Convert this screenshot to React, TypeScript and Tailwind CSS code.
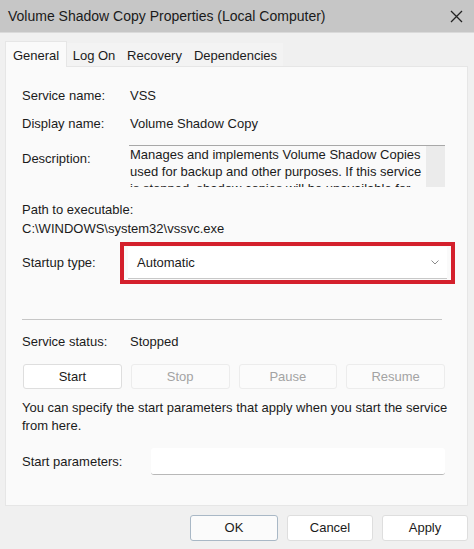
import React from "react";

const font = { fontFamily: '"Liberation Sans", Arial, sans-serif' };

function Btn({ children, disabled }: { children: React.ReactNode; disabled?: boolean }) {
  return (
    <div
      className={
        "h-[25px] flex items-center justify-center text-[13px] rounded-[3px] border " +
        (disabled ? "bg-[#fbfbfb] border-[#ececec] text-[#a3a3a3]" : "bg-white border-[#dedede] text-[#1b1b1b]")
      }
    >
      {children}
    </div>
  );
}

export default function App() {
  return (
    <div className="w-[474px] h-[549px] bg-[#f0f0f0] flex flex-col text-[#1b1b1b] overflow-hidden" style={font}>
      {/* Title bar */}
      <div className="h-[33px] bg-[#c6c6c6] border-b border-[#dadada] flex items-center justify-between pl-[8px] pr-[11px] shrink-0">
        <span className="text-[14px] text-[#1a1a1a]">Volume Shadow Copy Properties (Local Computer)</span>
        <svg width="13" height="13" viewBox="0 0 13 13" className="mt-[1px]">
          <path d="M1 1 L12 12 M12 1 L1 12" stroke="#222" strokeWidth="1.3" fill="none" />
        </svg>
      </div>

      {/* Tabs */}
      <div className="flex items-end pl-[5px] pt-[8px] shrink-0">
        <div className="h-[26px] w-[62px] bg-[#fafafa] border-t border-l border-r border-[#e6e6e6] flex items-start justify-center pt-[4px] text-[13px] -mb-px relative z-10">
          General
        </div>
        <div className="h-[23px] w-[54px] bg-[#f3f3f3] flex items-center justify-center text-[13px] pt-[3px]">Log On</div>
        <div className="h-[23px] w-[67px] bg-[#f3f3f3] flex items-center justify-center text-[13px] pt-[3px]">Recovery</div>
        <div className="h-[23px] w-[95px] bg-[#f3f3f3] flex items-center justify-center text-[13px] pt-[3px]">Dependencies</div>
      </div>

      {/* Panel */}
      <div className="ml-[5px] mr-[6px] h-[440px] bg-[#fafafa] border border-[#e6e6e6] flex flex-col pl-[16px] text-[13px] shrink-0">
        <div className="mt-[19px] h-[20px] flex items-center">
          <span className="w-[108px]">Service name:</span>
          <span>VSS</span>
        </div>
        <div className="mt-[8px] h-[20px] flex items-center">
          <span className="w-[108px]">Display name:</span>
          <span>Volume Shadow Copy</span>
        </div>
        <div className="mt-[11px] flex items-start">
          <span className="w-[107px] pt-[5px] leading-[18px]">Description:</span>
          <div className="w-[316px] h-[42px] border-t border-[#a8a8a8] bg-[#fafafa] flex overflow-hidden">
            <div className="flex-1 pl-[1px] leading-[17px] text-[13px]">
              Manages and implements Volume Shadow Copies used for backup and other purposes. If this service is
              stopped, shadow copies will be unavailable for backup.
            </div>
            <div className="w-[19px] bg-[#ebebeb] shrink-0" />
          </div>
        </div>
        <div className="mt-[14px] leading-[18px]">Path to executable:</div>
        <div className="mt-[1px] leading-[18px]">C:\WINDOWS\system32\vssvc.exe</div>
        <div className="mt-[4px] flex items-center">
          <span className="w-[98px]">Startup type:</span>
          <div className="w-[335px] h-[42px] border-[4px] border-[#d4202c] px-[4px] py-[1px] flex">
            <div className="flex-1 h-[32px] bg-white border-b border-[#c8c8c8] flex items-center justify-between pl-[9px] pr-[8px]">
              <span>Automatic</span>
              <svg width="8" height="5" viewBox="0 0 8 5">
                <path d="M0.5 0.5 L4 4 L7.5 0.5" stroke="#8a8a8a" strokeWidth="1" fill="none" />
              </svg>
            </div>
          </div>
        </div>
        <div className="mt-[35px] w-[420px] h-px bg-[#c6c6c6]" />
        <div className="mt-[13px] h-[18px] flex items-center">
          <span className="w-[108px]">Service status:</span>
          <span>Stopped</span>
        </div>
        <div className="mt-[13px] ml-[1px] w-[422px] grid grid-cols-4 gap-[9px]">
          <Btn>Start</Btn>
          <Btn disabled>Stop</Btn>
          <Btn disabled>Pause</Btn>
          <Btn disabled>Resume</Btn>
        </div>
        <div className="mt-[10px] leading-[18px]">
          You can specify the start parameters that apply when you start the service
          <br />
          from here.
        </div>
        <div className="mt-[13px] flex items-center">
          <span className="w-[129px]">Start parameters:</span>
          <div className="w-[294px] h-[27px] bg-white border-b border-[#b8b8b8] rounded-[3px]" />
        </div>
      </div>

      {/* Bottom buttons */}
      <div className="flex justify-end gap-[9px] pr-[6px] mt-[9px]">
        <div className="w-[88px] h-[26px] bg-[#fbfbfb] border border-[#a9b8c6] rounded-[3px] flex items-center justify-center text-[13px]">OK</div>
        <div className="w-[86px] h-[26px] bg-white border border-[#dedede] rounded-[3px] flex items-center justify-center text-[13px]">Cancel</div>
        <div className="w-[86px] h-[26px] bg-white border border-[#dedede] rounded-[3px] flex items-center justify-center text-[13px]">Apply</div>
      </div>
    </div>
  );
}
